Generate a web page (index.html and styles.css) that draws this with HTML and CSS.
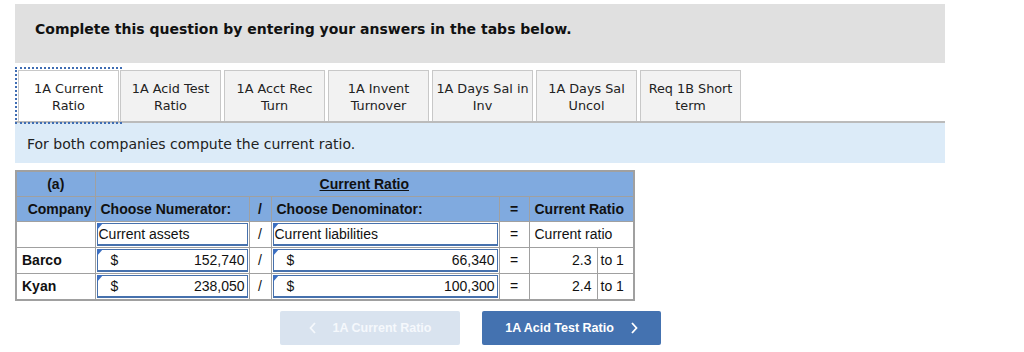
FILE: index.html
```html
<!DOCTYPE html>
<html lang="en">
<head>
    <meta charset="UTF-8">
    <title>Current Ratio</title>
    <link rel="stylesheet" href="styles.css">
</head>
<body>

<div class="page">
    <!-- Question header -->
    <div class="question-head">Complete this question by entering your answers in the tabs below.</div>

    <!-- Tabs -->
    <div class="tabs">
        <div class="tab active">1A Current<br>Ratio</div>
        <div class="tab">1A Acid Test<br>Ratio</div>
        <div class="tab">1A Acct Rec<br>Turn</div>
        <div class="tab">1A Invent<br>Turnover</div>
        <div class="tab">1A Days Sal in<br>Inv</div>
        <div class="tab">1A Days Sal<br>Uncol</div>
        <div class="tab">Req 1B Short<br>term</div>
    </div>

    <div class="instructions">For both companies compute the current ratio.</div>

    <!-- Ratio table -->
    <table class="ratio-table">
        <colgroup>
            <col class="c-company">
            <col class="c-num">
            <col class="c-op">
            <col class="c-den">
            <col class="c-eq">
            <col class="c-val">
            <col class="c-to">
        </colgroup>
        <tr class="head">
            <th class="center">(a)</th>
            <th colspan="6" class="center"><u>Current Ratio</u></th>
        </tr>
        <tr class="head">
            <th class="company-head">Company</th>
            <th>Choose Numerator:</th>
            <th class="center">/</th>
            <th>Choose Denominator:</th>
            <th class="center">=</th>
            <th colspan="2">Current Ratio</th>
        </tr>
        <tr>
            <td></td>
            <td class="input-cell"><div class="input label-input">Current assets</div></td>
            <td class="center">/</td>
            <td class="input-cell"><div class="input label-input">Current liabilities</div></td>
            <td class="center">=</td>
            <td colspan="2" class="plain">Current ratio</td>
        </tr>
        <tr>
            <td class="company">Barco</td>
            <td class="input-cell"><div class="input"><span class="cur">$</span><span>152,740</span></div></td>
            <td class="center">/</td>
            <td class="input-cell"><div class="input"><span class="cur">$</span><span>66,340</span></div></td>
            <td class="center">=</td>
            <td class="value">2.3</td>
            <td class="to">to 1</td>
        </tr>
        <tr>
            <td class="company">Kyan</td>
            <td class="input-cell"><div class="input"><span class="cur">$</span><span>238,050</span></div></td>
            <td class="center">/</td>
            <td class="input-cell"><div class="input"><span class="cur">$</span><span>100,300</span></div></td>
            <td class="center">=</td>
            <td class="value">2.4</td>
            <td class="to">to 1</td>
        </tr>
    </table>

    <!-- Navigation -->
    <div class="nav">
        <button class="nav-btn prev">
            <svg width="8" height="12" viewBox="0 0 8 12"><polyline points="6,1 1.5,6 6,11" fill="none" stroke="currentColor" stroke-width="1.8"/></svg>
            <span>1A Current Ratio</span>
        </button>
        <button class="nav-btn next">
            <span>1A Acid Test Ratio</span>
            <svg width="8" height="12" viewBox="0 0 8 12"><polyline points="2,1 6.5,6 2,11" fill="none" stroke="currentColor" stroke-width="1.8"/></svg>
        </button>
    </div>
</div>

</body>
</html>
```

FILE: styles.css
```css
* {
    margin: 0;
    padding: 0;
    box-sizing: border-box;
}

body {
    font-family: "DejaVu Sans", Verdana, sans-serif;
    background: #fff;
    color: #222;
}

.page {
    width: 945px;
    padding: 4px 0 0 15px;
}

.question-head {
    height: 59px;
    background: #e0e0e0;
    padding: 17px 0 0 20px;
    font-size: 14px;
    font-weight: bold;
    color: #111;
}

/* Tabs */
.tabs {
    display: flex;
    gap: 3px;
    margin-top: 7px;
    padding-left: 3px;
    border-bottom: 2px solid #bbb;
}

.tab {
    width: 101px;
    height: 51px;
    background: #f2f2f2;
    border: 1px solid #c8c8c8;
    border-bottom: none;
    text-align: center;
    font-size: 12.8px;
    line-height: 17px;
    padding-top: 9px;
    color: #222;
}

.tab.active {
    background: #fff;
    outline: 2px dotted #3f6db3;
    outline-offset: 1px;
    margin-right: -2px;
}

.instructions {
    height: 40px;
    background: #dcebf8;
    padding: 13px 0 0 12px;
    font-size: 14px;
    color: #222;
}

/* Table */
.ratio-table {
    margin-top: 7px;
    width: 618px;
    border-collapse: collapse;
    table-layout: fixed;
    font-family: "Liberation Sans", Arial, sans-serif;
    font-size: 14px;
    color: #111;
    border: 2px solid #a0a0a0;
}

.c-company { width: 79px; }
.c-num { width: 154px; }
.c-op { width: 22px; }
.c-den { width: 228px; }
.c-eq { width: 30px; }
.c-val { width: 68px; }
.c-to { width: 37px; }

.ratio-table th,
.ratio-table td {
    border: 1px solid #a0a0a0;
    height: 25px;
    padding: 0 5px;
    text-align: left;
    white-space: nowrap;
}

.ratio-table tr.head th {
    background: #80aadf;
    font-weight: bold;
}

.ratio-table th.company-head {
    text-align: right;
    padding-right: 3px;
}

.ratio-table .center {
    text-align: center;
    padding: 0;
}

.ratio-table td.company {
    font-weight: bold;
}

.ratio-table td.input-cell {
    padding: 1px;
}

.input {
    position: relative;
    height: 23px;
    background: #fff;
    border: 1px solid #4671ad;
    border-bottom-width: 2px;
    display: flex;
    align-items: center;
    justify-content: space-between;
    padding: 0 2px 0 13px;
}

.input.label-input {
    justify-content: flex-start;
    padding-left: 1px;
}

.input::before {
    content: "";
    position: absolute;
    left: -1px;
    top: -1px;
    border-top: 7px solid #3c6fc0;
    border-right: 6px solid transparent;
}

.ratio-table td.value {
    text-align: right;
}

.ratio-table td.to {
    padding-left: 3px;
}

/* Navigation */
.nav {
    display: flex;
    gap: 22px;
    margin-top: 10px;
    padding-left: 265px;
}

.nav-btn {
    height: 34px;
    width: 180px;
    border: none;
    border-radius: 2px;
    font-family: "Liberation Sans", Arial, sans-serif;
    font-size: 12.5px;
    font-weight: bold;
    display: flex;
    align-items: center;
    justify-content: center;
    gap: 16px;
}

.nav-btn.prev {
    background: #d9e3ef;
    color: #f5f8fc;
}

.nav-btn.next {
    width: 179px;
    background: #4472b0;
    color: #fff;
}
```
